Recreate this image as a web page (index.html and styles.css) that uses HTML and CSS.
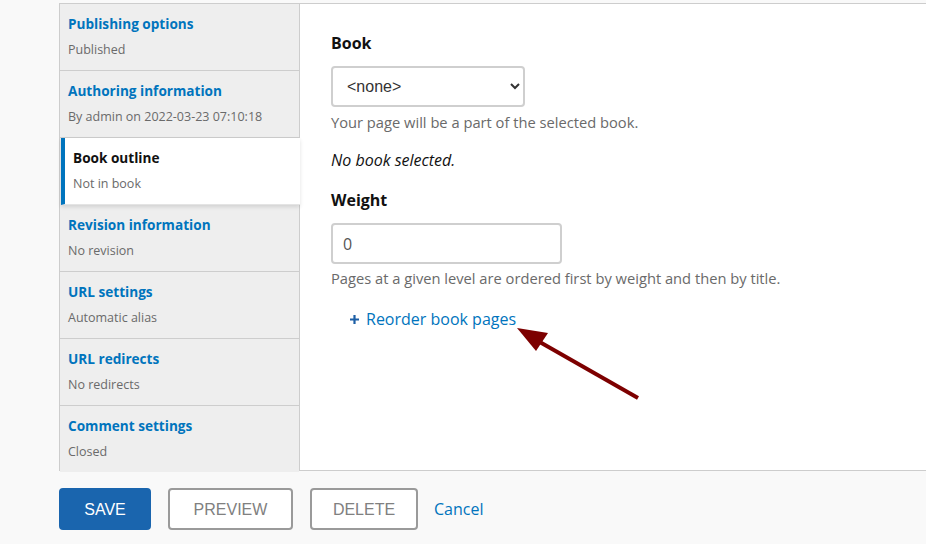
FILE: index.html
```html
<!DOCTYPE html>
<html lang="en">
<head>
<meta charset="utf-8">
<title>Book outline</title>
<link rel="stylesheet" href="styles.css">
</head>
<body>
<div class="page">
  <div class="box">
    <ul class="tabs">
      <li class="tab"><a class="tab-title" href="#">Publishing options</a><span class="tab-summary">Published</span></li>
      <li class="tab"><a class="tab-title" href="#">Authoring information</a><span class="tab-summary">By admin on 2022-03-23 07:10:18</span></li>
      <li class="tab selected"><a class="tab-title" href="#">Book outline</a><span class="tab-summary">Not in book</span></li>
      <li class="tab"><a class="tab-title" href="#">Revision information</a><span class="tab-summary">No revision</span></li>
      <li class="tab"><a class="tab-title" href="#">URL settings</a><span class="tab-summary">Automatic alias</span></li>
      <li class="tab"><a class="tab-title" href="#">URL redirects</a><span class="tab-summary">No redirects</span></li>
      <li class="tab last"><a class="tab-title" href="#">Comment settings</a><span class="tab-summary">Closed</span></li>
    </ul>
    <div class="panel">
      <label class="label label-book" for="book">Book</label>
      <select id="book" class="select"><option>&lt;none&gt;</option></select>
      <p class="desc desc-book">Your page will be a part of the selected book.</p>
      <p class="status">No book selected.</p>
      <label class="label label-weight" for="weight">Weight</label>
      <input id="weight" class="input" type="text" value="0">
      <p class="desc desc-weight">Pages at a given level are ordered first by weight and then by title.</p>
      <a class="reorder" href="#"><svg class="plus" width="9" height="9" viewBox="0 0 9 9"><path d="M3.4 0h2.2v3.4H9v2.2H5.6V9H3.4V5.6H0V3.4h3.4z" fill="#1d5fa6"/></svg>Reorder book pages</a>
    </div>
  </div>
  <div class="actions">
    <button class="btn btn-primary btn-save" type="button">SAVE</button>
    <button class="btn btn-preview" type="button">PREVIEW</button>
    <button class="btn btn-delete" type="button">DELETE</button>
    <a class="cancel" href="#">Cancel</a>
  </div>
  <svg class="arrow" width="926" height="544" viewBox="0 0 926 544">
    <line x1="638" y1="398" x2="538" y2="341" stroke="#7d0000" stroke-width="4"/>
    <polygon points="517,328 548,333 536,351" fill="#7d0000"/>
  </svg>
</div>
</body>
</html>
```

FILE: styles.css
```css
* { box-sizing: border-box; }
html, body { margin: 0; padding: 0; }
body {
  background: #f9f9f9;
  font-family: "Open Sans", "Noto Sans", sans-serif;
  color: #222;
  width: 926px;
  height: 544px;
  overflow: hidden;
}
.page {
  position: relative;
  padding: 3px 0 0 59px;
}
.box {
  display: flex;
  height: 468px;
  background: #fff;
  border-top: 1px solid #cdcdcd;
  border-left: 1px solid #cdcdcd;
  border-bottom: 1px solid #cdcdcd;
}
.tabs {
  list-style: none;
  margin: 0;
  padding: 0;
  width: 240px;
  flex: none;
  background: #eee;
  border-right: 1px solid #cdcdcd;
}
.tab {
  display: flex;
  flex-direction: column;
  height: 67px;
  padding: 10px 8px 0;
  border-bottom: 1px solid #cdcdcd;
  background: #eee;
}
.tab.last { border-bottom: 0; height: 66px; }
.tab-title {
  font-size: 13.6px;
  font-weight: 700;
  line-height: 20px;
  color: #0074bd;
  text-decoration: none;
}
.tab-summary {
  margin-top: 6px;
  font-size: 12.5px;
  line-height: 20px;
  color: #6a6a6a;
}
.tab.selected {
  position: relative;
  background: #fff;
  margin-left: 1px;
  margin-right: -1px;
  border-left: 4px solid #0074bd;
  border-bottom-color: #e4e4e4;
  box-shadow: 0 2px 4px rgba(0, 0, 0, 0.12);
  z-index: 1;
}
.tab.selected .tab-title { color: #111; }
.panel {
  flex: 1;
  display: flex;
  flex-direction: column;
  align-items: flex-start;
  padding: 28px 0 0 31px;
}
.label {
  font-size: 16px;
  font-weight: 700;
  line-height: 22px;
  color: #111;
}
.select {
  margin-top: 12px;
  width: 194px;
  height: 41px;
  padding: 0 8px 0 10px;
  border: 2px solid #cfcfcf;
  border-radius: 4px;
  background: #fff;
  font-family: "Liberation Sans", Arial, sans-serif;
  font-size: 16px;
  color: #333;
}
.desc {
  margin: 5px 0 0;
  font-size: 14.7px;
  line-height: 20px;
  color: #6a6a6a;
}
.status {
  margin: 16px 0 0;
  font-size: 16px;
  font-style: italic;
  line-height: 24px;
  color: #111;
}
.label-weight { margin-top: 17px; }
.input {
  margin-top: 12px;
  width: 231px;
  height: 41px;
  padding: 0 10px;
  border: 2px solid #cfcfcf;
  border-radius: 4px;
  font-family: "Open Sans", sans-serif;
  font-size: 16px;
  color: #555;
}
.desc-weight { margin-top: 4px; }
.reorder {
  margin: 19px 0 0 19px;
  display: flex;
  align-items: center;
  gap: 7px;
  font-size: 16px;
  line-height: 24px;
  color: #0074bd;
  text-decoration: none;
}
.actions {
  display: flex;
  align-items: center;
  gap: 17px;
  margin-top: 17px;
}
.btn {
  height: 42px;
  padding: 1px 0 0;
  text-align: center;
  border: 2px solid #9a9a9a;
  border-radius: 4px;
  background: #fff;
  font-family: "Liberation Sans", Arial, sans-serif;
  font-size: 16px;
  color: #808080;
}
.btn-save { width: 92px; }
.btn-preview { width: 125px; }
.btn-delete { width: 108px; }
.btn-primary {
  background: #1a65ae;
  border-color: #1a65ae;
  color: #fff;
}
.cancel {
  margin-left: -1px;
  font-size: 16px;
  color: #0074bd;
  text-decoration: none;
}
.arrow {
  position: absolute;
  left: 0;
  top: 0;
  pointer-events: none;
}
```
